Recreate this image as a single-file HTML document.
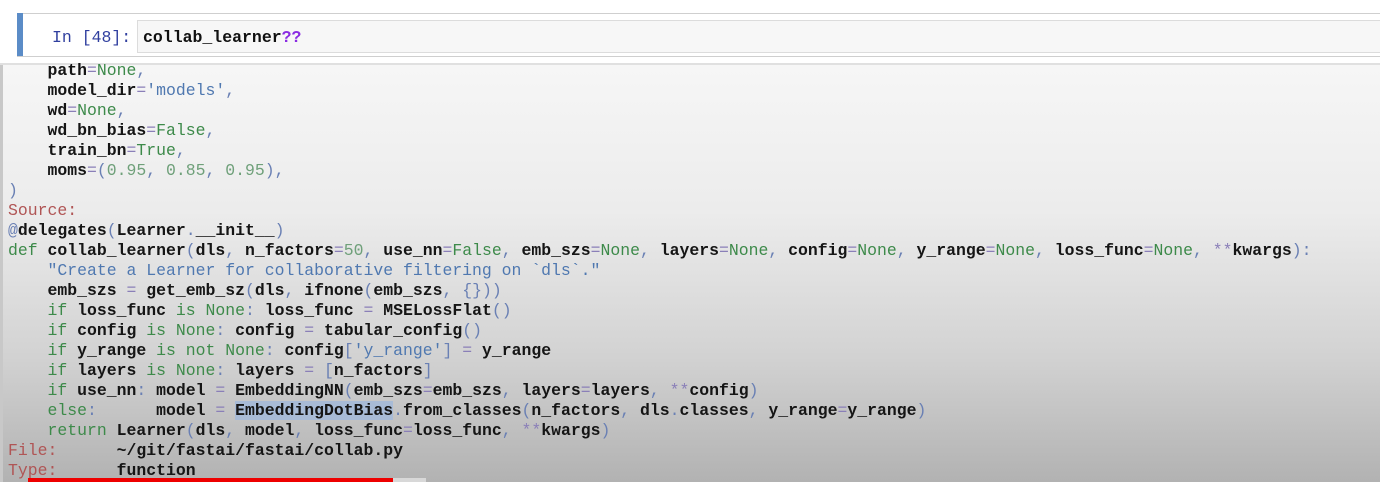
<!DOCTYPE html>
<html><head><meta charset="utf-8"><style>
html,body{margin:0;padding:0;width:1380px;height:482px;overflow:hidden;background:#fff;font-family:"Liberation Mono",monospace}
.cell{position:absolute;left:17px;top:13px;width:1363px;height:42px;border-top:1px solid #cfcfcf;border-bottom:1px solid #cfcfcf;background:#fff}
.bar{position:absolute;left:17px;top:13px;width:6px;height:43px;background:#5b8cc7}
.prompt{position:absolute;left:52px;top:28px;font-size:16.5px;color:#303f9f;line-height:20px}
.inp{position:absolute;left:137px;top:20px;width:1243px;height:33px;background:#f7f7f7;border:1px solid #dcdcdc;border-right:none;box-sizing:border-box}
.inp span{position:absolute;left:5px;top:7px;font-size:16.5px;line-height:20px;color:#111;font-weight:bold}
.div{position:absolute;left:0;top:62px;width:1380px;height:2px;background:#e0e0e0;border-top:1px solid #fff}
.out{position:absolute;left:0;top:65px;width:1380px;height:417px;background:linear-gradient(#f6f6f6 0%,#ececec 35%,#d2d2d2 70%,#b2b2b2 100%);border-left:3px solid #c8c8c8;box-sizing:border-box}
pre{position:absolute;left:8px;top:61px;margin:0;font-family:"Liberation Mono",monospace;font-size:16.47px;line-height:20px;color:#151515;font-weight:bold;white-space:pre}
.k{color:#3d8a4a;font-weight:normal}.o{color:#8a7fb8;font-weight:normal}.p{color:#6a80b4;font-weight:normal}.n{color:#6fa07a;font-weight:normal}.s{color:#4f78b0;font-weight:normal}.r{color:#b05555;font-weight:normal}.h{background:#a8bbd6}
.red{position:absolute;left:28px;top:478px;width:365px;height:4px;background:#e00}
.red2{position:absolute;left:393px;top:478px;width:33px;height:4px;background:#d8d8d8}
</style></head><body>
<div class="cell"></div><div class="bar"></div>
<div class="prompt">In [48]:</div>
<div class="inp"><span>collab_learner<b style="color:#8a2be2">??</b></span></div>
<div class="div"></div>
<div class="out"></div>
<pre>    path<span class="o">=</span><span class="k">None</span><span class="p">,</span>
    model_dir<span class="o">=</span><span class="s">'models'</span><span class="p">,</span>
    wd<span class="o">=</span><span class="k">None</span><span class="p">,</span>
    wd_bn_bias<span class="o">=</span><span class="k">False</span><span class="p">,</span>
    train_bn<span class="o">=</span><span class="k">True</span><span class="p">,</span>
    moms<span class="o">=</span><span class="p">(</span><span class="n">0.95</span><span class="p">,</span> <span class="n">0.85</span><span class="p">,</span> <span class="n">0.95</span><span class="p">),</span>
<span class="p">)</span>
<span class="r">Source:</span>
<span class="p">@</span>delegates<span class="p">(</span>Learner<span class="p">.</span>__init__<span class="p">)</span>
<span class="k">def</span> collab_learner<span class="p">(</span>dls<span class="p">,</span> n_factors<span class="o">=</span><span class="n">50</span><span class="p">,</span> use_nn<span class="o">=</span><span class="k">False</span><span class="p">,</span> emb_szs<span class="o">=</span><span class="k">None</span><span class="p">,</span> layers<span class="o">=</span><span class="k">None</span><span class="p">,</span> config<span class="o">=</span><span class="k">None</span><span class="p">,</span> y_range<span class="o">=</span><span class="k">None</span><span class="p">,</span> loss_func<span class="o">=</span><span class="k">None</span><span class="p">,</span> <span class="o">**</span>kwargs<span class="p">):</span>
    <span class="s">"Create a Learner for collaborative filtering on `dls`."</span>
    emb_szs <span class="o">=</span> get_emb_sz<span class="p">(</span>dls<span class="p">,</span> ifnone<span class="p">(</span>emb_szs<span class="p">,</span> <span class="p">{}))</span>
    <span class="k">if</span> loss_func <span class="k">is</span> <span class="k">None</span><span class="p">:</span> loss_func <span class="o">=</span> MSELossFlat<span class="p">()</span>
    <span class="k">if</span> config <span class="k">is</span> <span class="k">None</span><span class="p">:</span> config <span class="o">=</span> tabular_config<span class="p">()</span>
    <span class="k">if</span> y_range <span class="k">is</span> <span class="k">not</span> <span class="k">None</span><span class="p">:</span> config<span class="p">[</span><span class="s">'y_range'</span><span class="p">]</span> <span class="o">=</span> y_range
    <span class="k">if</span> layers <span class="k">is</span> <span class="k">None</span><span class="p">:</span> layers <span class="o">=</span> <span class="p">[</span>n_factors<span class="p">]</span>
    <span class="k">if</span> use_nn<span class="p">:</span> model <span class="o">=</span> EmbeddingNN<span class="p">(</span>emb_szs<span class="o">=</span>emb_szs<span class="p">,</span> layers<span class="o">=</span>layers<span class="p">,</span> <span class="o">**</span>config<span class="p">)</span>
    <span class="k">else</span><span class="p">:</span>      model <span class="o">=</span> <span class="h">EmbeddingDotBias</span><span class="p">.</span>from_classes<span class="p">(</span>n_factors<span class="p">,</span> dls<span class="p">.</span>classes<span class="p">,</span> y_range<span class="o">=</span>y_range<span class="p">)</span>
    <span class="k">return</span> Learner<span class="p">(</span>dls<span class="p">,</span> model<span class="p">,</span> loss_func<span class="o">=</span>loss_func<span class="p">,</span> <span class="o">**</span>kwargs<span class="p">)</span>
<span class="r">File:</span>      ~/git/fastai/fastai/collab.py
<span class="r">Type:</span>      function</pre>
<div class="red"></div><div class="red2"></div>
</body></html>
